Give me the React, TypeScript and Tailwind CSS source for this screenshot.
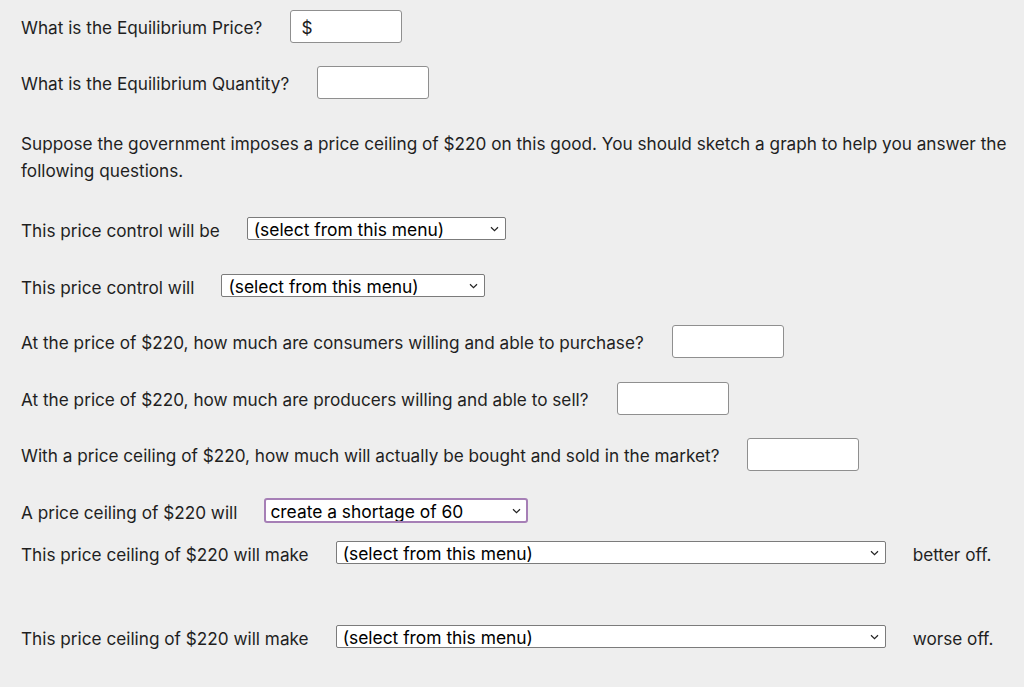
import React from "react";

const font = { fontFamily: 'Inter, "Liberation Sans", Arial, sans-serif' };

const Chevron = () => (
  <svg
    width="9"
    height="6"
    viewBox="0 0 9 6"
    className="absolute right-[7px] top-1/2 -translate-y-1/2 pointer-events-none"
  >
    <path d="M1 1.2 L4.5 4.6 L8 1.2" fill="none" stroke="#222" strokeWidth="1.2" />
  </svg>
);

const TextBox = ({ value = "" }: { value?: string }) => (
  <input
    type="text"
    defaultValue={value}
    className="w-[112px] h-[33px] bg-white border border-[#8f8f8f] rounded-[3px] px-[10px] pt-[1px] text-[17.2px] text-[#1c1c1c] outline-none"
    style={font}
  />
);

const Label = ({ children }: { children: React.ReactNode }) => (
  <span className="pt-[3px]">{children}</span>
);

const Select = ({
  width,
  label,
  highlight = false,
}: {
  width: string;
  label: string;
  highlight?: boolean;
}) => (
  <div className={`relative ${width}`}>
    <select
      defaultValue=""
      className={
        highlight
          ? "appearance-none w-full h-[25px] bg-white border-2 border-[#a67fb6] rounded-[3px] pl-[4px] pr-[20px] pt-[1px] text-[17.4px] leading-[21px] text-black outline-none"
          : "appearance-none w-full h-[23px] bg-white border border-[#7b7b7b] rounded-[2px] pl-[6px] pr-[20px] pt-[1px] text-[17.4px] leading-[21px] text-black outline-none"
      }
      style={font}
    >
      <option value="">{label}</option>
    </select>
    <Chevron />
  </div>
);

export default function App() {
  return (
    <div
      className="w-[1024px] h-[687px] bg-[#eeeeee] text-[#1f1f1f] text-[17.2px] pt-[10px] pl-[21px] pr-[10px] overflow-hidden"
      style={font}
    >
      <div className="flex items-center gap-[28px] h-[33px]">
        <Label>What is the Equilibrium Price?</Label>
        <TextBox value="$" />
      </div>
      <div className="flex items-center gap-[28px] h-[33px] mt-[23px]">
        <Label>What is the Equilibrium Quantity?</Label>
        <TextBox />
      </div>

      <p className="leading-[27px] mt-[31px]">
        Suppose the government imposes a price ceiling of $220 on this good. You should sketch a
        graph to help you answer the following questions.
      </p>

      <div className="flex items-center gap-[27px] h-[33px] mt-[29px]">
        <Label>This price control will be</Label>
        <Select width="w-[259px]" label="(select from this menu)" />
      </div>
      <div className="flex items-center gap-[27px] h-[33px] mt-[24px]">
        <Label>This price control will</Label>
        <Select width="w-[264px]" label="(select from this menu)" />
      </div>

      <div className="flex items-center gap-[28px] h-[33px] mt-[22px]">
        <Label>At the price of $220, how much are consumers willing and able to purchase?</Label>
        <TextBox />
      </div>
      <div className="flex items-center gap-[28px] h-[33px] mt-[24px]">
        <Label>At the price of $220, how much are producers willing and able to sell?</Label>
        <TextBox />
      </div>
      <div className="flex items-center gap-[28px] h-[33px] mt-[23px]">
        <Label>With a price ceiling of $220, how much will actually be bought and sold in the market?</Label>
        <TextBox />
      </div>

      <div className="flex items-center gap-[27px] h-[33px] mt-[24px]">
        <Label>A price ceiling of $220 will</Label>
        <Select width="w-[264px]" label="create a shortage of 60" highlight />
      </div>
      <div className="flex items-center gap-[27px] h-[33px] mt-[9px]">
        <Label>This price ceiling of $220 will make</Label>
        <Select width="w-[550px]" label="(select from this menu)" />
        <Label>better off.</Label>
      </div>
      <div className="flex items-center gap-[27px] h-[33px] mt-[51px]">
        <Label>This price ceiling of $220 will make</Label>
        <Select width="w-[550px]" label="(select from this menu)" />
        <Label>worse off.</Label>
      </div>
    </div>
  );
}
